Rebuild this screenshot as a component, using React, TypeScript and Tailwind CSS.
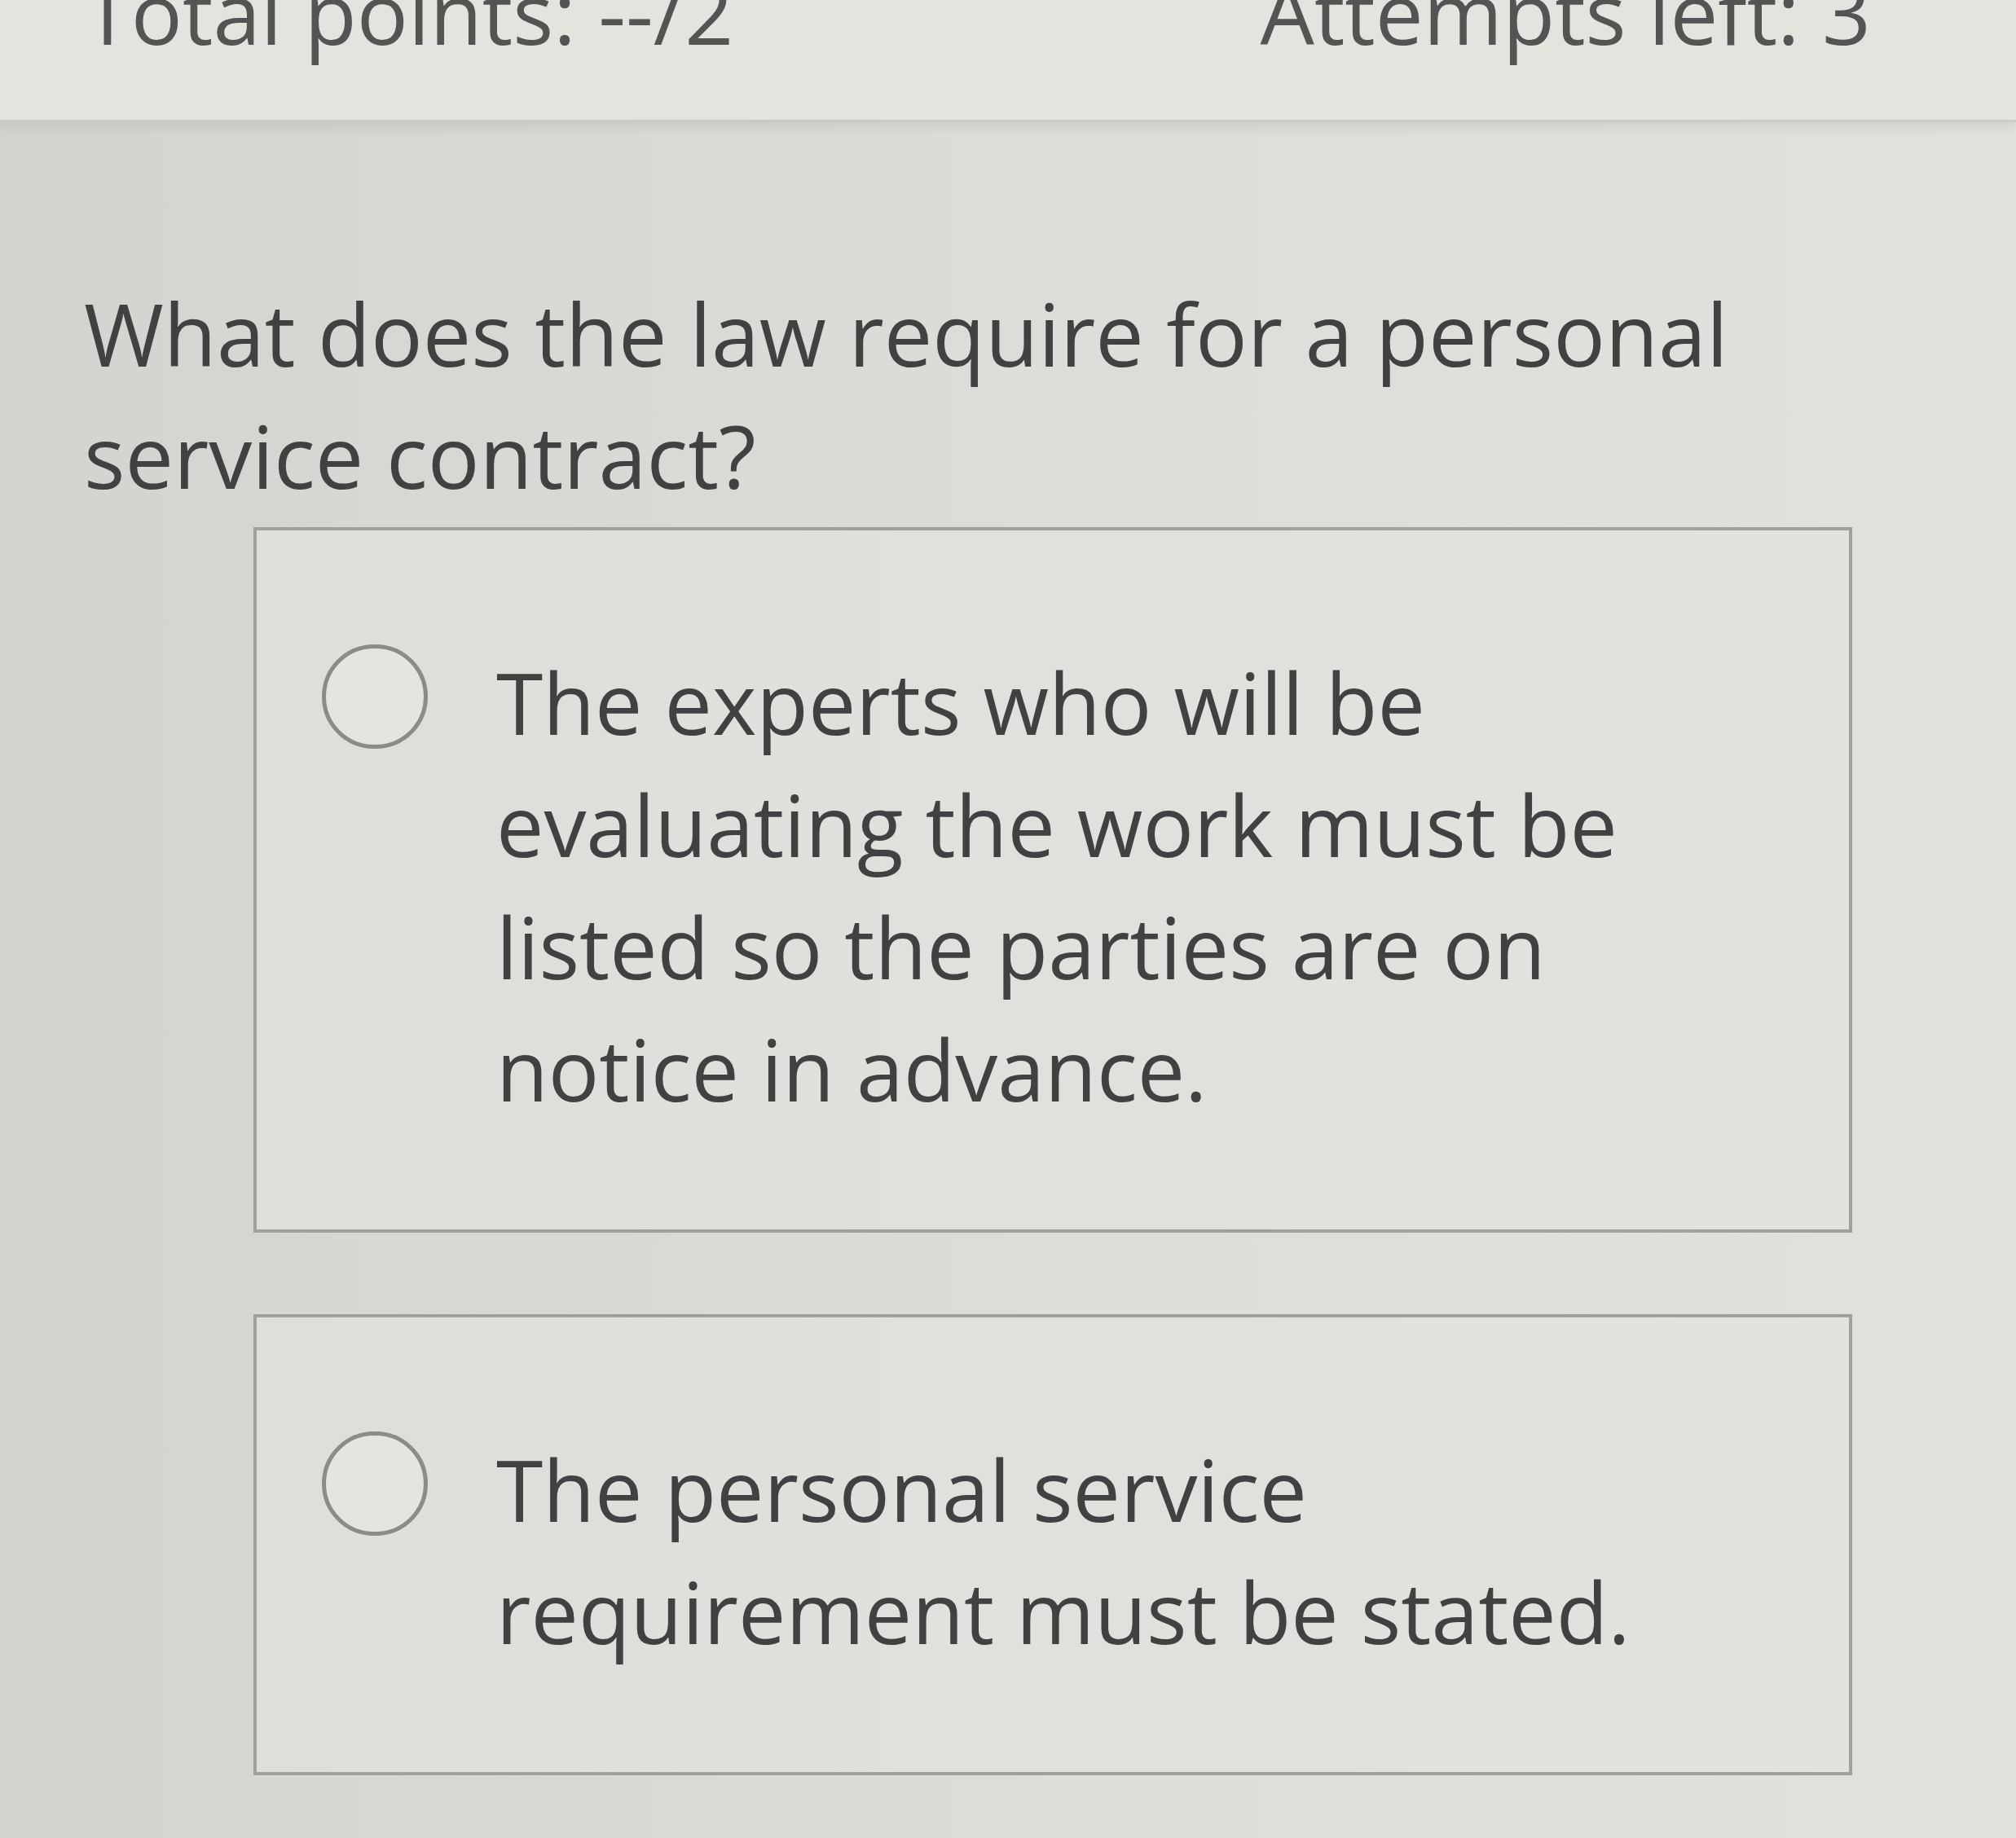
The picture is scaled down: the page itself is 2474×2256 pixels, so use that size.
import React from 'react';

const OPTIONS = [
    'The experts who will be evaluating the work must be listed so the parties are on notice in advance.',
    'The personal service requirement must be stated.',
];

function Radio() {
    return (
        <span className="mt-[4px] block h-[128px] w-[130px] shrink-0 rounded-full border-[5px] border-[#8b8b89] bg-[#e4e4e1]" />
    );
}

export default function App() {
    return (
        <div className="h-[2256px] w-[2474px] overflow-hidden bg-linear-to-r from-[#d3d3cf] via-[#dddcd8] to-[#e1e1dd] font-['Open_Sans',sans-serif] text-[#414141]">
            {/* Header */}
            <div className="flex h-[150px] items-start justify-between overflow-hidden border-b-[3px] border-[#cacac6] bg-[#e4e4df] pl-[103px] pr-[178px] shadow-[0_6px_14px_rgba(0,0,0,0.08)]">
                <span className="mt-[-38px] text-[105px] leading-none text-[#545454]">Total points: --/2</span>
                <span className="mt-[-38px] text-[105px] leading-none text-[#545454]">Attempts left: 3</span>
            </div>

            {/* Question */}
            <div className="pl-[103px] pt-[184px]">
                <p className="w-[2100px] text-[106px] leading-[150px]">
                    What does the law require for a personal service contract?
                </p>

                <div className="ml-[208px] mt-[13px] flex w-[1962px] flex-col gap-[100px]">
                    {OPTIONS.map((text) => (
                        <label
                            key={text}
                            className="flex items-start gap-[84px] border-4 border-[#a0a09e] bg-[#e3e3e0]/60 pb-[122px] pl-[80px] pt-[136px]"
                        >
                            <Radio />
                            <span className="w-[1500px] text-[104px] leading-[150px]">{text}</span>
                        </label>
                    ))}
                </div>
            </div>
        </div>
    );
}
